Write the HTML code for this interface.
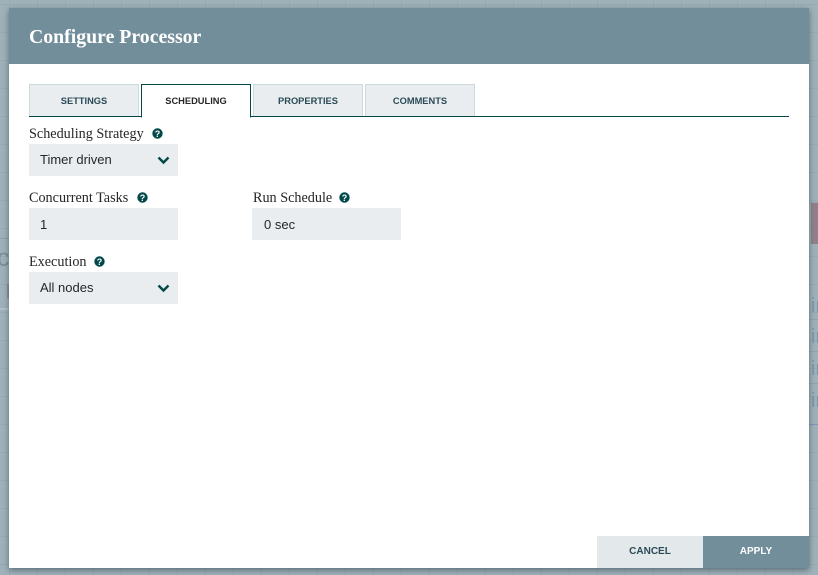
<!DOCTYPE html>
<html>
<head>
<meta charset="utf-8">
<style>
html,body{margin:0;padding:0}
body{width:818px;height:575px;overflow:hidden;position:relative;background-color:#a0b2b9;
background-image:linear-gradient(#98abb3 1px,transparent 1px),linear-gradient(90deg,#98abb3 1px,transparent 1px);background-size:28px 28px;background-position:9px 4px;font-family:"Liberation Sans",sans-serif}
.a{position:absolute}
#d{left:9px;top:8px;width:800px;height:560px;background:#fff;box-shadow:0 2px 6px rgba(30,50,60,.55)}
#h{left:9px;top:8px;width:800px;height:56px;background:#728e9b}
#t{left:29px;top:25px;font:bold 19.8px/24px "Liberation Serif",serif;color:#fff;white-space:nowrap}
.tab{top:84px;width:108px;height:31px;background:#e9edf0;border:1px solid #ccdadb;border-bottom:0;font-size:9.3px;font-weight:bold;line-height:33px;text-align:center;color:#2b4a56}
.tab.on{background:#fff;border:1px solid #004849;border-bottom:1px solid #fff;height:32px;z-index:2;color:#262626}
#line{left:29px;top:116px;width:760px;height:1px;background:#004849}
.l{font:14.2px/16px "Liberation Serif",serif;color:#262626;white-space:nowrap}
.f{width:149px;height:32px;background:#e9edf0;font-size:13px;line-height:32px;color:#262626;text-indent:11px}
.btn{top:536px;height:32px;font-size:10px;font-weight:bold;line-height:32px;text-align:center}
svg{position:absolute;display:block}
.bg{color:#7f99aa;font-size:20px;white-space:nowrap}
</style>
</head>
<body>
<div class="a" style="left:0;top:238px;width:9px;height:1px;background:#8da2aa"></div>
<div class="a" style="left:0;top:308px;width:9px;height:2px;background:#b3c1c7"></div>
<div class="a bg" style="left:-3px;top:244px;color:#7d8f98;font-size:25px">c</div>
<div class="a" style="left:7px;top:284px;width:3px;height:14px;background:#8b9499"></div>
<div class="a" style="left:811px;top:203px;width:7px;height:41px;background:#94808a"></div>
<div class="a" style="left:809px;top:202px;width:9px;height:1px;background:#93a5ad"></div>
<div class="a" style="left:809px;top:319px;width:9px;height:1px;background:#93a5ad"></div>
<div class="a" style="left:809px;top:351px;width:9px;height:1px;background:#93a5ad"></div>
<div class="a" style="left:809px;top:383px;width:9px;height:1px;background:#93a5ad"></div>
<div class="a" style="left:809px;top:424px;width:9px;height:1px;background:#8b93b5"></div>
<div class="a bg" style="left:811px;top:295px">in</div>
<div class="a bg" style="left:811px;top:326px">in</div>
<div class="a bg" style="left:811px;top:358px">in</div>
<div class="a bg" style="left:811px;top:390px">in</div>

<div class="a" id="d"></div>
<div class="a" id="h"></div>
<div class="a" id="t">Configure Processor</div>

<div class="a tab" style="left:29px">SETTINGS</div>
<div class="a tab on" style="left:141px">SCHEDULING</div>
<div class="a tab" style="left:253px">PROPERTIES</div>
<div class="a tab" style="left:365px">COMMENTS</div>
<div class="a" id="line"></div>

<div class="a l" style="left:29px;top:126px">Scheduling Strategy</div>
<svg style="left:152px;top:128px" width="11" height="11" viewBox="0 0 11 11"><circle cx="5.5" cy="5.5" r="5.2" fill="#004849"/><text x="5.5" y="9" text-anchor="middle" font-family="Liberation Sans" font-weight="bold" font-size="9" fill="#fff">?</text></svg>
<div class="a f" style="left:29px;top:144px">Timer driven</div>
<svg style="left:157px;top:156px" width="13" height="9" viewBox="0 0 13 9"><path d="M1.5 1.5L6.5 6.5L11.5 1.5" fill="none" stroke="#004849" stroke-width="2.4"/></svg>

<div class="a l" style="left:29px;top:190px">Concurrent Tasks</div>
<svg style="left:137px;top:192px" width="11" height="11" viewBox="0 0 11 11"><circle cx="5.5" cy="5.5" r="5.2" fill="#004849"/><text x="5.5" y="9" text-anchor="middle" font-family="Liberation Sans" font-weight="bold" font-size="9" fill="#fff">?</text></svg>
<div class="a f" style="left:29px;top:208px;line-height:34px">1</div>

<div class="a l" style="left:253px;top:190px">Run Schedule</div>
<svg style="left:339px;top:192px" width="11" height="11" viewBox="0 0 11 11"><circle cx="5.5" cy="5.5" r="5.2" fill="#004849"/><text x="5.5" y="9" text-anchor="middle" font-family="Liberation Sans" font-weight="bold" font-size="9" fill="#fff">?</text></svg>
<div class="a f" style="left:252px;top:208px;line-height:34px;text-indent:12px">0 sec</div>

<div class="a l" style="left:29px;top:254px">Execution</div>
<svg style="left:94px;top:256px" width="11" height="11" viewBox="0 0 11 11"><circle cx="5.5" cy="5.5" r="5.2" fill="#004849"/><text x="5.5" y="9" text-anchor="middle" font-family="Liberation Sans" font-weight="bold" font-size="9" fill="#fff">?</text></svg>
<div class="a f" style="left:29px;top:272px">All nodes</div>
<svg style="left:157px;top:284px" width="13" height="9" viewBox="0 0 13 9"><path d="M1.5 1.5L6.5 6.5L11.5 1.5" fill="none" stroke="#004849" stroke-width="2.4"/></svg>

<div class="a btn" style="left:597px;width:106px;background:#e3e8eb;color:#2b4a56">CANCEL</div>
<div class="a btn" style="left:703px;width:106px;background:#728e9b;color:#fff">APPLY</div>
</body>
</html>
